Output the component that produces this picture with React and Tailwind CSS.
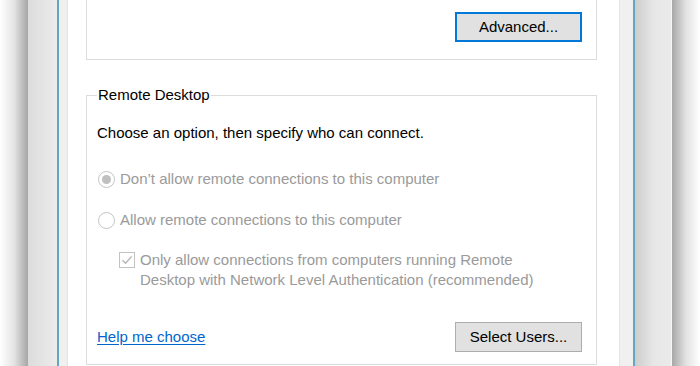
const font = { fontFamily: '"Liberation Sans", Arial, sans-serif' };

function WinButton({ children, focused }) {
  return (
    <button
      className={`h-[30px] w-[127px] bg-[#e1e1e1] text-[15px] text-black ${
        focused ? "border-2 border-[#0078d7]" : "border border-[#adadad]"
      }`}
    >
      {children}
    </button>
  );
}

function Radio({ checked, children }) {
  return (
    <div className="flex items-center h-[20px] text-[#9a9a9a]">
      <span className="ml-[1px] w-[17px] h-[17px] rounded-full border border-[#c3c3c3] bg-white flex items-center justify-center">
        {checked && <span className="w-[9px] h-[9px] rounded-full bg-[#bfbfbf]" />}
      </span>
      <span className="ml-[5px]">{children}</span>
    </div>
  );
}

export default function App() {
  return (
    <div className="flex w-[700px] h-[366px] overflow-hidden bg-white text-[15px] leading-[20px]" style={font}>
      {/* outer shadow + frame, left */}
      <div className="w-[28px] bg-gradient-to-r from-white via-[#e4e4e4] to-[#a6a6a6]" />
      <div className="w-[29px] bg-gradient-to-r from-[#dcdcdc] to-[#ececec]" />
      <div className="w-[2px] bg-[#62a7c2]" />
      <div className="w-[8px] bg-[#f0f0f0]" />

      {/* tab page */}
      <div className="w-[553px] bg-white border-x border-[#e3e3e3] pl-[18px] pr-[22px]">
        <div className="mt-[-40px] h-[100px] border border-[#dcdcdc] flex items-end justify-end pr-[14px] pb-[17px]">
          <WinButton focused>Advanced...</WinButton>
        </div>

        <fieldset className="mt-[25px] border border-[#dcdcdc] px-[10px] pb-[12px]">
          <legend className="px-[1px] text-black leading-[20px]">Remote Desktop</legend>
          <div className="mt-[18px] text-black">Choose an option, then specify who can connect.</div>
          <div className="mt-[26px]">
            <Radio checked>Don’t allow remote connections to this computer</Radio>
          </div>
          <div className="mt-[21px]">
            <Radio>Allow remote connections to this computer</Radio>
          </div>
          <div className="mt-[20px] ml-[22px] flex items-start text-[#9a9a9a]">
            <span className="mt-[2px] w-[16px] h-[16px] border border-[#c3c3c3] bg-white flex items-center justify-center shrink-0">
              <svg width="12" height="12" viewBox="0 0 12 12">
                <path d="M1.5 6.2 L4.6 9.2 L10.6 2.4" fill="none" stroke="#b5b5b5" strokeWidth="1.4" />
              </svg>
            </span>
            <div className="ml-[5px]">
              Only allow connections from computers running Remote
              <br />
              Desktop with Network Level Authentication (recommended)
            </div>
          </div>
          <div className="mt-[32px] flex items-center justify-between pr-[4px]">
            <a className="text-[#0066cc] underline underline-offset-2">Help me choose</a>
            <WinButton>Select Users...</WinButton>
          </div>
        </fieldset>
      </div>

      {/* frame + shadow, right */}
      <div className="w-[13px] bg-[#f0f0f0]" />
      <div className="w-[2px] bg-[#62a7c2]" />
      <div className="w-[37px] bg-gradient-to-r from-[#cdcdcd] via-[#e6e6e6] to-[#ebebeb] border-r border-[#f6f6f6]" />
      <div className="w-[28px] bg-gradient-to-r from-[#a8a8a8] via-[#e2e2e2] to-white" />
    </div>
  );
}
